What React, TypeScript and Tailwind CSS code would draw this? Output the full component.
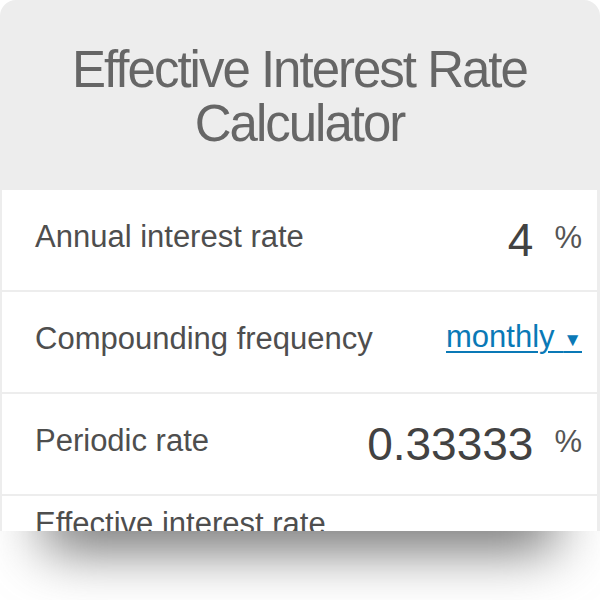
import { ReactNode } from 'react';

const font = { fontFamily: '"Liberation Sans", Arial, sans-serif' };

function Row({ label, children, wide }: { label: ReactNode; children: ReactNode; wide?: boolean }) {
  return (
    <div className="flex h-[100px] items-center justify-between bg-white pl-[33px] pr-[15px]">
      <div
        className={`-mt-[8px] text-[31px] leading-[37px] text-[#4e4e4e] ${wide ? 'max-w-[320px]' : 'whitespace-nowrap'}`}
      >
        {label}
      </div>
      <div className={`flex items-center ${wide ? 'mt-[2px]' : ''}`}>{children}</div>
    </div>
  );
}

function Value({ value }: { value: string }) {
  return (
    <>
      <span className="text-[46px] leading-none text-[#424242]">{value}</span>
      <span className="-mt-[5px] ml-[21px] text-[31px] leading-none text-[#555]">%</span>
    </>
  );
}

export default function App() {
  return (
    <div className="h-[600px] w-[600px] overflow-hidden bg-white" style={font}>
      <div className="h-[531px] overflow-hidden rounded-t-[16px] bg-[#ededed] pl-[2px] pr-[3px]">
        <h1 className="pt-[43px] pb-[39px] text-center text-[51px] leading-[54px] tracking-[-2px] text-[#666]">
          Effective Interest Rate
          <br />
          Calculator
        </h1>
        <div className="flex flex-col gap-[2px]">
          <Row label="Annual interest rate">
            <Value value="4" />
          </Row>
          <Row label="Compounding frequency">
            <span className="-mt-[8px] whitespace-nowrap text-[31px] leading-[37px] text-[#0a79b6] underline decoration-[2px] underline-offset-[4px]">
              monthly <span className="relative -top-[1px] text-[19px]">▼</span>
            </span>
          </Row>
          <Row label="Periodic rate">
            <Value value="0.33333" />
          </Row>
          <Row label="Effective interest rate (APY)" wide>
            <Value value="4.07415" />
          </Row>
        </div>
      </div>
      {/* soft drop shadow under the cut-off card */}
      <div className="relative h-[69px] overflow-hidden">
        <div className="absolute -top-[45px] left-[45px] right-[45px] h-[62px] bg-[#666] blur-[28px]" />
      </div>
    </div>
  );
}
